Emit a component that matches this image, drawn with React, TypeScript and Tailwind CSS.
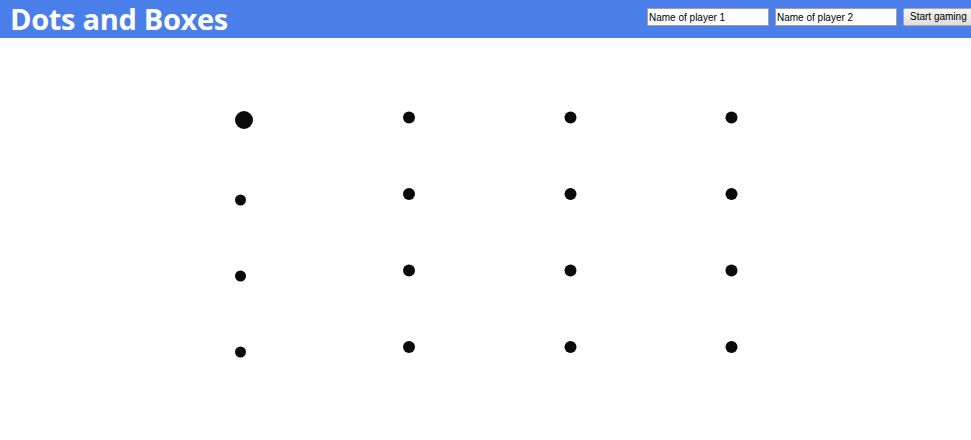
import { useState } from "react";

export default function App() {
  const [player1, setPlayer1] = useState("Name of player 1");
  const [player2, setPlayer2] = useState("Name of player 2");

  const cols = [409, 570.5, 731.5];
  const rows = [117.5, 194, 270.5, 347];

  // first column sits a little lower and to the left; first dot is the selected one
  const firstCol = [200, 276, 352];

  return (
    <div className="min-h-screen bg-white font-['Liberation_Sans',Arial,sans-serif]">
      {/* Header */}
      <header className="flex h-[38px] items-start overflow-hidden bg-[#4a7fea]">
        <h1 className="w-[647px] shrink-0 pl-[10px] font-['Open_Sans',sans-serif] text-[29px] font-bold leading-[37px] tracking-[-0.3px] text-white">
          Dots and Boxes
        </h1>
        <div className="flex shrink-0 items-center gap-[6px] pt-[8px]">
          <input
            value={player1}
            onChange={(e) => setPlayer1(e.target.value)}
            className="h-[18px] w-[122px] border border-[#a0a0a0] bg-white px-[1px] text-[10px] leading-[16px] text-black outline-none"
          />
          <input
            value={player2}
            onChange={(e) => setPlayer2(e.target.value)}
            className="h-[18px] w-[122px] border border-[#a0a0a0] bg-white px-[1px] text-[10px] leading-[16px] text-black outline-none"
          />
          <button className="h-[18px] shrink-0 rounded-[2px] border border-[#a8a8a8] bg-gradient-to-b from-[#f6f6f6] to-[#dedede] px-[6px] text-[10px] leading-[16px] text-black">
            Start gaming
          </button>
        </div>
      </header>

      {/* Board */}
      <svg width="971" height="402" className="block">
        <g fill="#0b0b0b" transform="translate(0,-38)">
          <circle cx={244} cy={120} r={9} />
          {firstCol.map((y) => (
            <circle key={y} cx={240.5} cy={y} r={5.5} />
          ))}
          {cols.map((x) =>
            rows.map((y) => <circle key={`${x}-${y}`} cx={x} cy={y} r={6} />)
          )}
        </g>
      </svg>
    </div>
  );
}
